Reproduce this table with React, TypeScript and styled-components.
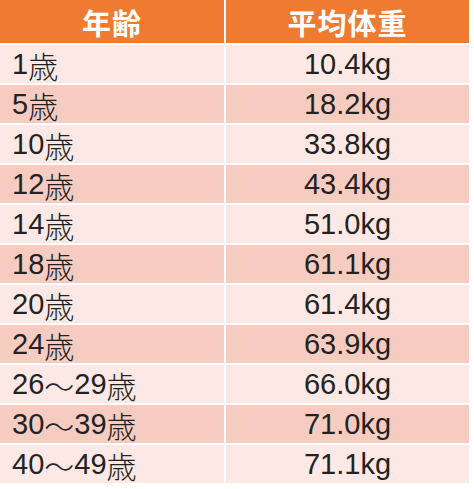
import React from "react";
import styled, {createGlobalStyle} from "styled-components";

const GlobalStyle = createGlobalStyle`
    html, body {
        margin: 0;
        padding: 0;
        background: #ffffff;
    }
    body {
        font-family: "Liberation Sans", "Noto Sans CJK JP", sans-serif;
    }
`;

const Table = styled('div')`
    width: 469px;
    display: grid;
    grid-template-columns: 224px 243px;
    column-gap: 2px;
    row-gap: 2px;
`;

const HeadCell = styled('div')`
    height: 43px;
    background-color: #ee7b31;
    color: #ffffff;
    font-family: "Noto Sans CJK JP", sans-serif;
    font-weight: 700;
    font-size: 29px;
    display: flex;
    align-items: center;
    justify-content: center;
    letter-spacing: 1px;
`;

const Cell = styled('div')<{$alt: boolean; $center?: boolean}>`
    height: 38px;
    background-color: ${p => p.$alt ? '#f6ccc1' : '#fce9e5'};
    color: #222222;
    font-size: 29px;
    display: flex;
    align-items: center;
    justify-content: ${p => p.$center ? 'center' : 'flex-start'};
    padding-left: ${p => p.$center ? '0' : '12px'};
    padding-top: 1px;
    box-sizing: border-box;
    white-space: nowrap;
`;

const Kanji = styled('span')`
    font-family: "Noto Sans CJK JP", sans-serif;
    font-size: 30px;
    font-weight: 300;
`;

const rows: [string, string][] = [
    ['1', '10.4kg'],
    ['5', '18.2kg'],
    ['10', '33.8kg'],
    ['12', '43.4kg'],
    ['14', '51.0kg'],
    ['18', '61.1kg'],
    ['20', '61.4kg'],
    ['24', '63.9kg'],
    ['26～29', '66.0kg'],
    ['30～39', '71.0kg'],
    ['40～49', '71.1kg'],
];

const Age: React.FC<{age: string}> = ({age}) => {
    const parts = age.split('～');
    return (
        <>
            {parts[0]}
            {parts.length > 1 && <Kanji>～</Kanji>}
            {parts[1]}
            <Kanji>歳</Kanji>
        </>
    );
};

const App: React.FC = () => {
    return (
        <>
            <GlobalStyle/>
            <Table>
                <HeadCell>年齢</HeadCell>
                <HeadCell>平均体重</HeadCell>
                {rows.map(([age, weight], i) => (
                    <React.Fragment key={age}>
                        <Cell $alt={i % 2 === 1}><Age age={age}/></Cell>
                        <Cell $alt={i % 2 === 1} $center>{weight}</Cell>
                    </React.Fragment>
                ))}
            </Table>
        </>
    );
};

export default App;
